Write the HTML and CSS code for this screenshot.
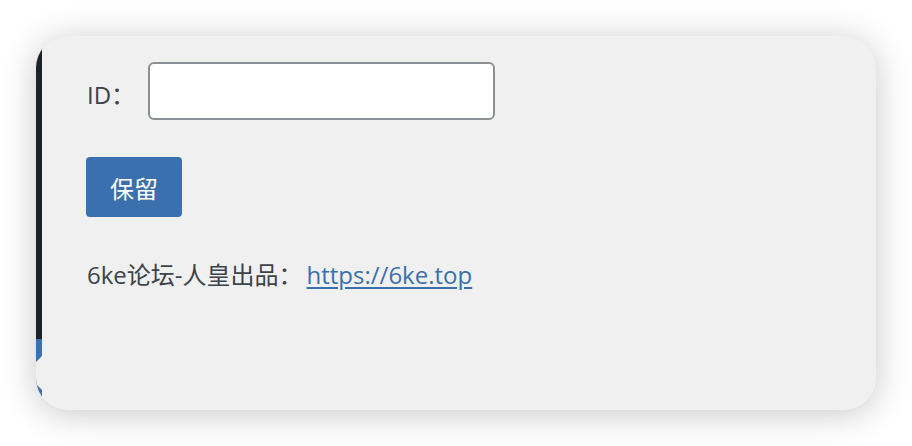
FILE: index.html
```html
<!DOCTYPE html>
<html lang="zh-CN">
<head>
<meta charset="utf-8">
<title>6ke</title>
<link rel="stylesheet" href="styles.css">
</head>
<body>
<div class="window">
  <aside class="sidebar">
    <div class="sb-dark"></div>
    <div class="sb-current">
      <svg class="sb-arrow" width="6" height="71" viewBox="0 0 6 71"><polygon points="6,17 -11,34 6,51" fill="#f0f0f0"/></svg>
    </div>
  </aside>
  <main class="content">
    <div class="field-row">
      <label class="field-label" for="id">ID：</label>
      <input class="field-input" id="id" type="text">
    </div>
    <button class="btn-primary" type="button">保留</button>
    <p class="credit">6ke论坛-人皇出品：<a class="credit-link" href="#">https://6ke.top</a></p>
  </main>
</div>
</body>
</html>
```

FILE: styles.css
```css
html, body {
  margin: 0;
  padding: 0;
  background: #ffffff;
}

body {
  padding: 36px;
  font-family: "Open Sans", "Noto Sans CJK SC", sans-serif;
  color: #3c434a;
}

.window {
  width: 840px;
  height: 374px;
  background: #f0f0f0;
  border-radius: 32px;
  overflow: hidden;
  display: flex;
  box-shadow: 0 4px 34px rgba(0, 0, 0, 0.22);
}

.sidebar {
  width: 6px;
  flex: none;
  display: flex;
  flex-direction: column;
}

.sb-dark {
  height: 303px;
  background: #1d2327;
}

.sb-current {
  flex: 1;
  background: #3a70ad;
  display: flex;
}

.sb-arrow {
  display: block;
}

.content {
  flex: 1;
  padding: 26px 0 0 45px;
}

.field-row {
  display: flex;
  align-items: center;
}

.field-label {
  width: 61px;
  font-size: 24px;
  line-height: 1;
  margin-top: 7px;
}

.field-input {
  width: 347px;
  height: 58px;
  box-sizing: border-box;
  border: 2px solid #8c8f94;
  border-radius: 6px;
  background: #fff;
  margin: 0;
  padding: 0 10px;
  font: inherit;
}

.btn-primary {
  display: block;
  margin: 37px 0 0 -1px;
  width: 96px;
  height: 60px;
  background: #3a70ad;
  border: none;
  border-radius: 4px;
  color: #fff;
  font-family: "Noto Sans CJK SC", sans-serif;
  font-size: 24px;
  padding: 0;
}

.credit {
  margin: 43px 0 0;
  font-size: 24px;
  line-height: 30px;
}

.credit-link {
  color: #3a70ad;
  text-decoration: underline;
  text-underline-offset: 3px;
  margin-left: 4px;
}
```
